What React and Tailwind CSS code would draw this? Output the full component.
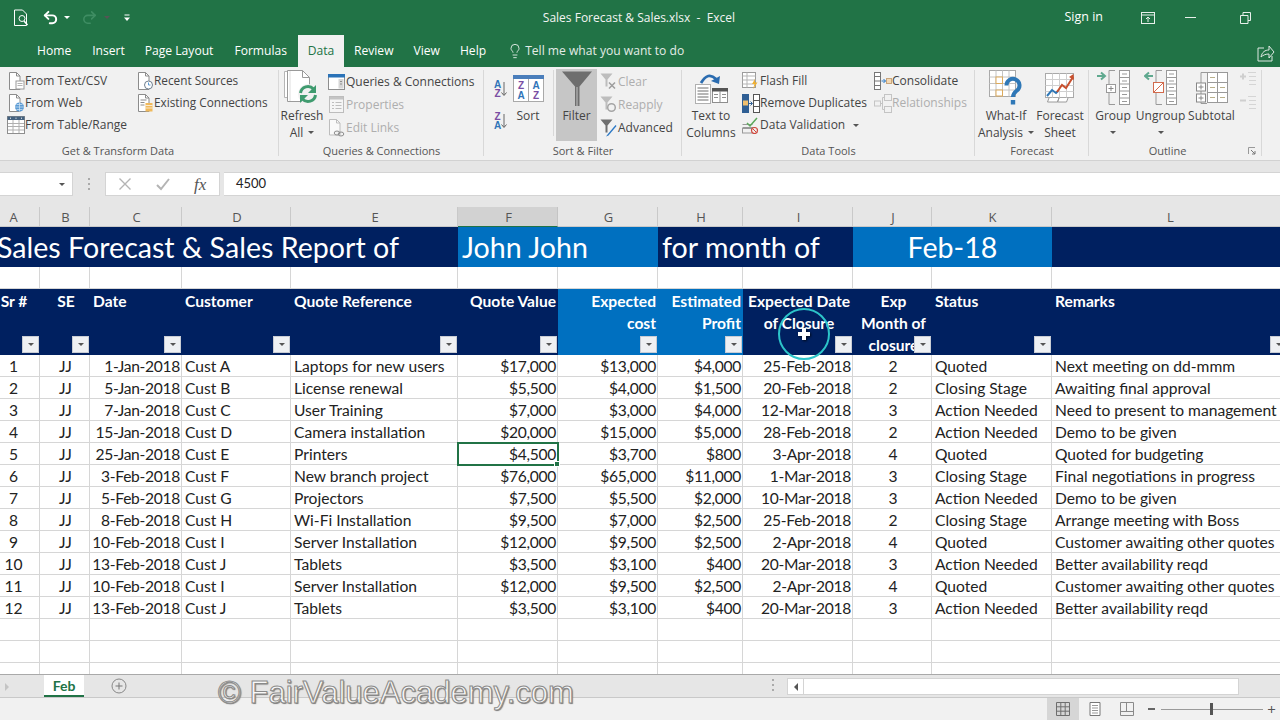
import React from "react";
import { Lightbulb, Undo2, Redo2 } from "lucide-react";

const G = "#8c8c8c";
const I = ({ children, w = 16, h = 16, className = "" }) => (
  <svg width={w} height={h} viewBox={`0 0 ${w} ${h}`} className={`shrink-0 ${className}`}>{children}</svg>
);
const FromText = () => <I w={18} h={18}><path d="M2.500 .5h7l3.500 3.500v13.500h-10.500z" fill="#fff" stroke={G} /><path d="M9.500 .5v3.500h3.500" fill="none" stroke={G} /><rect x="9" y="9" width="8" height="8" fill="#fff" stroke="#9a9a9a" /><path d="M10.500 11.500h5M10.500 13.500h5" stroke="#b5b5b5" /></I>;
const FromWeb = () => <I w={18} h={18}><path d="M2.500 .5h7l3.500 3.500v13.500h-10.500z" fill="#fff" stroke={G} /><path d="M9.500 .5v3.500h3.500" fill="none" stroke={G} /><circle cx="12.500" cy="13" r="4.500" fill="#5b9bd5" /><path d="M8 13h9M12.500 8.500v9M9.500 10.500h6M9.500 15.500h6" stroke="#d5e6f5" strokeWidth=".7" /></I>;
const TableRange = () => <I w={18} h={18}><rect x=".5" y=".5" width="17" height="17" fill="#fff" stroke="#8e8e8e" /><rect x=".5" y=".5" width="17" height="3.500" fill="#44617f" /><path d="M1 7.500h16M1 10.500h16M1 14h16M6 4v13M12 4v13" stroke="#b0b0b0" /><path d="M3 2.200h1M8.500 2.200h1M14 2.200h1" stroke="#fff" /></I>;
const Recent = () => <I w={18} h={18}><path d="M2.500 .5h7l3.500 3.500v13.500h-10.500z" fill="#fff" stroke={G} /><path d="M9.500 .5v3.500h3.500" fill="none" stroke={G} /><circle cx="12.500" cy="13" r="4" fill="#fff" stroke="#6f7f8f" /><path d="M12.500 10.500v2.500h2" fill="none" stroke="#5b9bd5" /></I>;
const Existing = () => <I w={18} h={18}><path d="M2.500 .5h7l3.500 3.500v13.500h-10.500z" fill="#fff" stroke={G} /><path d="M9.500 .5v3.500h3.500M4.500 6h6M4.500 8.500h4M4.500 11h4" fill="none" stroke={G} /><rect x="9.500" y="9" width="7" height="8.500" fill="#f0b95b" /><path d="M9.500 11.500h7M9.500 14h7" stroke="#fff" strokeWidth=".7" /></I>;
const Queries = () => <I w={17} h={16}><rect x=".5" y=".5" width="16" height="15" fill="#fff" stroke="#8e8e8e" /><rect x="0" y="0" width="17" height="3.500" fill="#2b73b8" /><rect x="10.500" y="5" width="5" height="9.500" fill="#d6d6d6" /><path d="M12 7.500h2M12 10h2" stroke="#8e8e8e" /></I>;
const Properties = () => <I w={15} h={17}><rect x=".5" y=".5" width="14" height="16" fill="#f5f5f5" stroke="#bdbdbd" /><rect x="1" y="1" width="13" height="2.500" fill="#c4c4c4" /><path d="M3 6.500h2M6.500 6.500h6M3 9.500h2M6.500 9.500h6M3 12.500h2M6.500 12.500h6" stroke="#bdbdbd" /></I>;
const EditLinks = () => <I w={17} h={18}><path d="M1.500 .5h7l3.500 3.500v12h-10.500z" fill="#f9f9f9" stroke="#bdbdbd" /><path d="M8.500 .5v3.500h3.500" fill="none" stroke="#bdbdbd" /><ellipse cx="9" cy="14" rx="2.800" ry="2" fill="#f1f1f1" stroke="#8f8f8f" /><ellipse cx="13" cy="15" rx="2.800" ry="2" fill="none" stroke="#8f8f8f" /></I>;
const Refresh = () => <I w={36} h={36}><path d="M.5 1.500h19v26h-19z" fill="#fff" stroke="#b5b5b5" /><path d="M3.500 .5h15l7 7v24h-22z" fill="#fff" stroke="#9a9a9a" /><path d="M18.500 .5v7h7" fill="none" stroke="#9a9a9a" /><path d="M6 1v30" stroke="#dedede" /><circle cx="24" cy="24" r="10" fill="#f1f1f1" /><path d="M16.500 23a7.500 7.500 0 0 1 13-4" fill="none" stroke="#3f9b6f" strokeWidth="3" /><path d="M32 15v8h-8z" fill="#3f9b6f" /><path d="M31.500 25a7.500 7.500 0 0 1-13 4" fill="none" stroke="#3f9b6f" strokeWidth="3" /><path d="M16 33v-8h8z" fill="#3f9b6f" /></I>;
const Letter = ({ x, y, c, children, s = 10 }) => <text x={x} y={y} fill={c} fontSize={s} fontWeight="700" fontFamily="Liberation Sans, sans-serif" textAnchor="middle">{children}</text>;
const AZ = ({ flip }) => <I w={14} h={18}><Letter x="4.500" y="8" c={flip ? "#7a4ea3" : "#2f74b8"}>{flip ? "Z" : "A"}</Letter><Letter x="4.500" y="16.500" c={flip ? "#2f74b8" : "#7a4ea3"}>{flip ? "A" : "Z"}</Letter><path d="M11 2v13M8.500 12.500l2.500 3 2.500-3" fill="none" stroke="#666" /></I>;
const SortBig = () => <I w={31} h={27}><rect x=".5" y=".5" width="30" height="26" fill="#fff" stroke="#a9a9a9" /><rect x="0" y="0" width="31" height="4" fill="#4a7ebb" /><path d="M15.500 4v23" stroke="#a9a9a9" /><Letter x="8" y="14" c="#7a4ea3">Z</Letter><Letter x="8" y="24" c="#2f74b8">A</Letter><Letter x="23" y="14" c="#2f74b8">A</Letter><Letter x="23" y="24" c="#7a4ea3">Z</Letter></I>;
const Funnel = () => <I w={30} h={36}><path d="M0 .5h30l-12.500 15v19.500h-4.500v-19.500z" fill="#6e6e6e" /><path d="M15 16v19" stroke="#a8a8a8" strokeWidth="1.500" /></I>;
const mini = c => <path d="M.5 .5h12l-5 6v7h-2v-7z" fill={c} />;
const Clear = () => <I w={17} h={17}>{mini("#bdbdbd")}<path d="M9 9.500l6 6M15 9.500l-6 6" stroke="#9d9d9d" strokeWidth="1.500" /></I>;
const Reapply = () => <I w={17} h={17}>{mini("#bdbdbd")}<circle cx="11.500" cy="11.500" r="3.800" fill="none" stroke="#a5a5a5" strokeWidth="1.500" /></I>;
const Advanced = () => <I w={17} h={18}>{mini("#6e6e6e")}<path d="M15.500 6l-8 9.500-1.500 2 2.500-1 8-9.500z" fill="#2b78c5" /></I>;
const TextCols = () => <I w={33} h={32}><path d="M6 11 q7 -12 15 -4" fill="none" stroke="#2b6cb0" strokeWidth="2.800" /><path d="M25 4l-1 8-8-3z" fill="#2b6cb0" /><rect x=".5" y="12.500" width="15" height="19" fill="#fff" stroke="#b0b0b0" /><path d="M2.500 16h11M2.500 19h11M2.500 22h11M2.500 25h11M2.500 28h11" stroke="#6f6f6f" /><rect x="17.500" y="16.500" width="15" height="14" fill="#fff" stroke="#8e8e8e" /><rect x="17" y="16" width="16" height="3.500" fill="#555" /><path d="M25 19v12M19 22.500h4M19 25.500h4M27 22.500h4M27 25.500h4" stroke="#8e8e8e" /></I>;
const FlashFill = () => <I w={17} h={18}><rect x=".5" y=".5" width="13" height="15" fill="#fff" stroke="#9c9c9c" /><path d="M.5 4h13M.5 8h13M.5 12h13M5 .5v15" stroke="#b5b5b5" /><path d="M13 7l-3 5h2.500l-1.500 5 4.500-6.500h-2.500z" fill="#f0b030" /></I>;
const RemoveDup = () => <I w={18} h={19}><rect x="0" y="0" width="7" height="19" fill="#2f5f94" /><rect x="1" y="6.500" width="5" height="5" fill="#f0c070" /><rect x="11.500" y=".5" width="6" height="18" fill="#fff" stroke="#555" /><path d="M11.500 6.500h6M11.500 12.500h6" stroke="#555" /><path d="M7 9.500h3M8.500 7.500l2 2-2 2" stroke="#2f5f94" fill="none" /></I>;
const DataVal = () => <I w={17} h={17}><path d="M.5 7.500h10M.5 10.500h13" stroke="#999" fill="none" /><rect x=".5" y="11.500" width="12" height="4.500" fill="#f1f1f1" stroke="#999" /><path d="M5 6l3 3 7-8" fill="none" stroke="#5aa85a" strokeWidth="1.500" /><circle cx="12.500" cy="13.500" r="3" fill="#f1f1f1" stroke="#d0473c" strokeWidth="1.200" /><path d="M10.500 11.500l4 4" stroke="#d0473c" /></I>;
const Consolidate = () => <I w={18} h={18}><rect x=".5" y=".5" width="6" height="17" fill="#fff" stroke="#777" /><path d="M.5 4.500h6M.5 9h6M.5 13.500h6" stroke="#777" /><path d="M7.500 9h4M9.500 7l2 2-2 2" stroke="#2b78c5" fill="none" /><rect x="12.500" y="6.500" width="5" height="5" fill="#f3d9b5" stroke="#c9a57c" /></I>;
const Relationships = () => <I w={18} h={19}><rect x=".5" y="7" width="6" height="5" fill="#f1f1f1" stroke="#c4c4c4" /><rect x="10.500" y=".5" width="7" height="6" fill="#f1f1f1" stroke="#c4c4c4" /><rect x="10.500" y="12.500" width="7" height="6" fill="#f1f1f1" stroke="#c4c4c4" /><path d="M6.500 9.500h2M8.500 3.500v12M8.500 3.500h2M8.500 15.500h2" stroke="#c4c4c4" fill="none" /></I>;
const WhatIf = () => <I w={34} h={37}><rect x=".5" y=".5" width="26" height="26" fill="#fff" stroke="#a9a9a9" /><path d="M.5 7h26M.5 13.500h26M.5 20h26M7 .5v26M13.500 .5v26M20 .5v26" stroke="#c4c4c4" /><rect x="7" y="7" width="6.500" height="6.500" fill="#fff" stroke="#dcaa5c" /><rect x="7" y="20" width="6.500" height="6" fill="#fff" stroke="#dcaa5c" /><path d="M17.500 15.500a6.500 6.500 0 1 1 10.500 5c-2.500 2-4 3-4 6.500" fill="none" stroke="#2f78b7" strokeWidth="4" /><rect x="21.800" y="30" width="4.400" height="4.500" fill="#2f78b7" /></I>;
const Forecast = () => <I w={31} h={31}><rect x=".5" y=".5" width="28" height="24" fill="#fff" stroke="#a9a9a9" /><path d="M.5 6.500h28M.5 12.500h28M.5 18.500h28M7.500 .5v24M14.500 .5v24M21.500 .5v24" stroke="#cfcfcf" /><path d="M2 23l5-6 4 3 2-2" fill="none" stroke="#2f78b7" strokeWidth="2" /><path d="M12 19l5-7 4 3 7-11" fill="none" stroke="#c8502e" strokeWidth="2" /><path d="M28.500 1l.5 6-5-3z" fill="#c8502e" /><path d="M4 25l-1.500 4h10l1.500-4M14 25l-1.500 4h9l1.500-4" fill="#fff" stroke="#9a9a9a" /></I>;
const list = x => <><rect x={x + .5} y=".5" width="10" height="34" fill="#fff" stroke="#999" /><path d={`M${x + .5} 7.500h10M${x + .5} 14h10M${x + .5} 21h10M${x + .5} 28h10M${x + 3} 4h5M${x + 3} 11h5M${x + 3} 17.500h5M${x + 3} 24.500h5M${x + 3} 31.500h5`} stroke="#999" fill="none" /></>;
const GroupIc = () => <I w={33} h={36}><path d="M0 6h7M4 2.500l4 3.500-4 3.500" fill="none" stroke="#5fa98f" strokeWidth="2" /><path d="M18 .5h-6v34h6" fill="none" stroke="#999" />{list(22)}<rect x="9.500" y="14.500" width="9" height="8" fill="#fff" stroke="#999" /><path d="M11.500 18.500h5M14 16v5" stroke="#888" /></I>;
const UngroupIc = () => <I w={33} h={36}><path d="M9 6h-7M5 2.500l-4 3.500 4 3.500" fill="none" stroke="#5fa98f" strokeWidth="2" /><path d="M18 .5h-6v34h6" fill="none" stroke="#999" />{list(22)}<rect x="9.500" y="12.500" width="10" height="10" fill="#fff" stroke="#d26a4c" /><path d="M10 22l9-9" stroke="#d26a4c" /></I>;
const SubtotalIc = () => <I w={32} h={32}><path d="M11 .5h-6v31h6" fill="none" stroke="#999" /><rect x="11.500" y=".5" width="20" height="30" fill="#fff" stroke="#999" /><path d="M11.500 10.500h20M11.500 20.500h20M21.500 .5v30" stroke="#999" /><path d="M14 5.500h5M14 15.500h5M14 25.500h5M24 15.500h5M24 25.500h5" stroke="#b9b08c" /><rect x=".5" y="11" width="9" height="8" fill="#fff" stroke="#888" /><rect x=".5" y="22" width="9" height="8" fill="#fff" stroke="#888" /><path d="M2.500 15h5M5 12.500v5M2.500 26h5M5 23.500v5" stroke="#888" /></I>;
const Detail = ({ plus }) => <I w={17} h={15}><path d="M0 4.500h6" stroke="#cfcfcf" strokeWidth="2" />{plus && <path d="M3 1.500v6" stroke="#cfcfcf" strokeWidth="2" />}<path d="M8 .5h8M9 4.500h7M9 8.500h7M9 12.500h7" stroke="#d5d5d5" /></I>;
const Caret = ({ className = "" }) => <span className={`inline-block w-0 h-0 border-x-[3px] border-x-transparent border-t-[3px] border-t-[#555] ${className}`} />;

const Small = ({ icon, label, off, caret, slot = "w-[19px]", h = "h-[22px]" }) => (
  <div className={`flex items-center ${h} whitespace-nowrap ${off ? "text-[#aeaeae]" : "text-[#444]"}`}>
    <span className={`${slot} flex justify-center shrink-0`}>{icon}</span>
    <span>{label}</span>
    {caret && <Caret className="ml-[8px]" />}
  </div>
);
const Big = ({ icon, lines, className = "" }) => (
  <div className={`flex flex-col items-center leading-[17px] text-[#444] whitespace-nowrap ${className}`}>
    <div className="h-[38px] flex items-center justify-center">{icon}</div>
    {lines.map((l, i) => <div key={i} className="h-[17px] flex items-center">{l}</div>)}
  </div>
);
const Group = ({ w, label, children, lc = "" }) => (
  <div className={`${w} shrink-0 relative flex flex-col h-full`}>
    <div className="flex-1 flex min-h-0 pt-[2px]">{children}</div>
    <div className={`h-[18px] text-[11px] leading-[18px] text-center text-[#555] ${lc}`}>{label}</div>
    <div className="absolute right-0 top-[3px] bottom-[4px] w-px bg-[#d8d8d8]" />
  </div>
);

const cols = "grid grid-cols-[54px_50px_92px_109px_167px_100px_100px_85px_110px_79px_120px_236px]";
const cell = "border-r border-b border-[#d6d6d6] h-[22px] leading-[21px] pt-[1px] whitespace-nowrap overflow-hidden";
const L = `${cell} pl-[3px]`;
const C = `${cell} pl-[2px] text-center`;
const R = `${cell} pr-[1px] text-right tracking-[-0.3px]`;
const letters = ["A", "B", "C", "D", "E", "F", "G", "H", "I", "J", "K", "L"];
const rows = [
  [1, "1-Jan-2018", "Cust A", "Laptops for new users", "$17,000", "$13,000", "$4,000", "25-Feb-2018", 2, "Quoted", "Next meeting on dd-mmm"],
  [2, "5-Jan-2018", "Cust B", "License renewal", "$5,500", "$4,000", "$1,500", "20-Feb-2018", 2, "Closing Stage", "Awaiting final approval"],
  [3, "7-Jan-2018", "Cust C", "User Training", "$7,000", "$3,000", "$4,000", "12-Mar-2018", 3, "Action Needed", "Need to present to management"],
  [4, "15-Jan-2018", "Cust D", "Camera installation", "$20,000", "$15,000", "$5,000", "28-Feb-2018", 2, "Action Needed", "Demo to be given"],
  [5, "25-Jan-2018", "Cust E", "Printers", "$4,500", "$3,700", "$800", "3-Apr-2018", 4, "Quoted", "Quoted for budgeting"],
  [6, "3-Feb-2018", "Cust F", "New branch project", "$76,000", "$65,000", "$11,000", "1-Mar-2018", 3, "Closing Stage", "Final negotiations in progress"],
  [7, "5-Feb-2018", "Cust G", "Projectors", "$7,500", "$5,500", "$2,000", "10-Mar-2018", 3, "Action Needed", "Demo to be given"],
  [8, "8-Feb-2018", "Cust H", "Wi-Fi Installation", "$9,500", "$7,000", "$2,500", "25-Feb-2018", 2, "Closing Stage", "Arrange meeting with Boss"],
  [9, "10-Feb-2018", "Cust I", "Server Installation", "$12,000", "$9,500", "$2,500", "2-Apr-2018", 4, "Quoted", "Customer awaiting other quotes"],
  [10, "13-Feb-2018", "Cust J", "Tablets", "$3,500", "$3,100", "$400", "20-Mar-2018", 3, "Action Needed", "Better availability reqd"],
  [11, "10-Feb-2018", "Cust I", "Server Installation", "$12,000", "$9,500", "$2,500", "2-Apr-2018", 4, "Quoted", "Customer awaiting other quotes"],
  [12, "13-Feb-2018", "Cust J", "Tablets", "$3,500", "$3,100", "$400", "20-Mar-2018", 3, "Action Needed", "Better availability reqd"],
];
const Fbtn = () => (
  <span className="absolute bottom-[2px] right-[1px] w-[17px] h-[17px] bg-[#eef0f3] border border-[#c8ccd4] flex items-center justify-center"><Caret /></span>
);
const headers = [
  { t: ["Sr #"], a: "text-center pl-[2px]", bg: "bg-[#002060]" },
  { t: ["SE"], a: "text-center pl-[2px]", bg: "bg-[#002060]" },
  { t: ["Date"], a: "text-left pl-[3px]", bg: "bg-[#002060]" },
  { t: ["Customer"], a: "text-left pl-[3px]", bg: "bg-[#002060]" },
  { t: ["Quote Reference"], a: "text-left pl-[3px]", bg: "bg-[#002060]" },
  { t: ["Quote Value"], a: "text-right pr-[2px]", bg: "bg-[#002060]" },
  { t: ["Expected", "cost"], a: "text-right pr-[2px]", bg: "bg-[#0070c0]" },
  { t: ["Estimated", "Profit"], a: "text-right pr-[2px]", bg: "bg-[#0070c0]" },
  { t: ["Expected Date", "of Closure"], a: "text-center pl-[2px]", bg: "bg-[#002060]" },
  { t: ["Exp", "Month of", "closure"], a: "text-center pl-[2px]", bg: "bg-[#002060]" },
  { t: ["Status"], a: "text-left pl-[3px]", bg: "bg-[#002060]" },
  { t: ["Remarks"], a: "text-left pl-[3px]", bg: "bg-[#002060]" },
];

export default function App() {
  return (
    <div className="relative w-[1280px] h-[720px] overflow-hidden flex flex-col bg-white font-['Open_Sans',sans-serif] text-[12px]">
      {/* Title bar */}
      <div className="h-[35px] shrink-0 bg-[#217346] flex items-center text-white">
        <div className="w-[534px] flex items-center pl-[13px] gap-0">
          <svg width="18" height="18" viewBox="0 0 18 18" className="shrink-0"><path d="M1.500 1h8l4 4v11.500h-12z" fill="none" stroke="#fff" /><circle cx="9" cy="9.500" r="3" fill="none" stroke="#fff" /><path d="M11 12l3.500 4" stroke="#fff" strokeWidth="1.500" /></svg>
          <Undo2 size={17} strokeWidth={2.8} className="ml-[11px] text-white" />
          <Caret className="ml-[5px] border-t-white" />
          <Redo2 size={17} strokeWidth={2.2} className="ml-[11px] text-[#3f8d63]" />
          <Caret className="ml-[6px] border-t-[#3f8d63]" />
          <svg width="8" height="8" viewBox="0 0 8 8" className="ml-[13px] shrink-0"><path d="M1.500 1h5" stroke="#fff" /><path d="M1 3.500h6l-3 3.500z" fill="#fff" /></svg>
        </div>
        <div className="w-[210px] text-center text-[12px] whitespace-pre text-[#f3f3f3]">Sales Forecast &amp; Sales.xlsx  -  Excel</div>
        <div className="flex-1 flex items-center justify-end">
          <span className="mr-[38px] text-[12.500px]">Sign in</span>
          <svg width="14" height="12" viewBox="0 0 14 12" className="mr-[30px]"><rect x=".5" y=".5" width="13" height="11" fill="none" stroke="#e8f0eb" /><path d="M.5 3h13" stroke="#e8f0eb" /><path d="M7 10V5M5 7l2-2 2 2" fill="none" stroke="#e8f0eb" /></svg>
          <span className="w-[11px] h-px bg-[#e8f0eb] mr-[44px]" />
          <svg width="11" height="12" viewBox="0 0 11 12" className="mr-[29px]"><path d="M.5 3.500h7.500v8h-7.500zM3 3.500v-3h7.500v8h-2.500" fill="none" stroke="#e8f0eb" /></svg>
        </div>
      </div>
      {/* Tabs */}
      <div className="h-[32px] shrink-0 bg-[#217346] flex items-end text-white text-[12.100px] relative">
        <div className="h-[32px] w-[298px] flex items-center pl-[37px] whitespace-nowrap">
          <span>Home</span><span className="ml-[21px]">Insert</span><span className="ml-[20px]">Page Layout</span><span className="ml-[21px]">Formulas</span>
        </div>
        <div className="h-[32px] w-[46px] bg-[#f1f1f1] text-[#217346] flex items-center justify-center">Data</div>
        <div className="h-[32px] flex items-center pl-[10px] whitespace-nowrap">
          <span>Review</span><span className="ml-[20px]">View</span><span className="ml-[20px]">Help</span>
          <Lightbulb size={16} strokeWidth={1.200} className="ml-[21px] text-white" />
          <span className="ml-[2px] text-[#e3ece6]">Tell me what you want to do</span>
        </div>
        <svg width="18" height="18" viewBox="0 0 18 18" className="absolute right-[5px] top-[9px]"><path d="M7 4H1v13h14v-5" fill="none" stroke="#dfe9e3" /><path d="M4 13c1-5 4-7 8-7V2l5 6-5 6v-4c-3 0-6 1-8 3z" fill="none" stroke="#dfe9e3" /></svg>
      </div>
      {/* Ribbon */}
      <div className="h-[94px] shrink-0 bg-[#f1f1f1] border-b border-[#d2d2d2] flex text-[12px] leading-none text-[#444]">
        <Group w="w-[279px]" label="Get & Transform Data" lc="pr-[43px]">
          <div className="w-[135px] pl-[6px] pt-[1px]">
            <Small icon={<FromText />} label="From Text/CSV" />
            <Small icon={<FromWeb />} label="From Web" />
            <Small icon={<TableRange />} label="From Table/Range" />
          </div>
          <div className="pt-[1px] text-[11.800px]">
            <Small icon={<Recent />} label="Recent Sources" />
            <Small icon={<Existing />} label="Existing Connections" />
          </div>
        </Group>
        <Group w="w-[205px]" label="Queries & Connections">
          <Big className="w-[46px]" icon={<Refresh />} lines={["Refresh", <>All<Caret className="ml-[5px] mb-[1px]" /></>]} />
          <div className="pt-[1px] ml-[2px]">
            <Small h="h-[23px]" icon={<Queries />} label="Queries & Connections" />
            <Small h="h-[23px]" off icon={<Properties />} label="Properties" />
            <Small h="h-[23px]" off icon={<EditLinks />} label="Edit Links" />
          </div>
        </Group>
        <Group w="w-[198px]" label="Sort & Filter">
          <div className="w-[25px] pl-[9px] pt-[11px] flex flex-col gap-[14px]"><AZ /><AZ flip /></div>
          <Big className="w-[38px]" icon={<SortBig />} lines={["Sort"]} />
          <div className="w-px h-[66px] mt-[1px] ml-[6px] bg-[#d8d8d8]" />
          <div className="w-[41px] h-[72px] ml-[2px] bg-[#c6c6c6] flex flex-col items-center text-[#444] shrink-0">
            <div className="h-[38px] flex items-center pt-[2px]"><Funnel /></div>
            <div className="h-[17px] flex items-center">Filter</div>
          </div>
          <div className="pt-[1px] ml-[2px]">
            <Small h="h-[23px]" off icon={<Clear />} label="Clear" />
            <Small h="h-[23px]" off icon={<Reapply />} label="Reapply" />
            <Small h="h-[23px]" icon={<Advanced />} label="Advanced" />
          </div>
        </Group>
        <Group w="w-[293px]" label="Data Tools">
          <Big className="w-[58px]" icon={<TextCols />} lines={["Text to", "Columns"]} />
          <div className="w-[133px] pl-[1px] pt-[1px]">
            <Small icon={<FlashFill />} label="Flash Fill" />
            <Small icon={<RemoveDup />} label="Remove Duplicates" />
            <Small icon={<DataVal />} label="Data Validation" caret />
          </div>
          <div className="pt-[1px]">
            <Small icon={<Consolidate />} label="Consolidate" />
            <Small off icon={<Relationships />} label="Relationships" />
          </div>
        </Group>
        <Group w="w-[114px]" label="Forecast">
          <Big className="w-[62px]" icon={<WhatIf />} lines={["What-If", <>Analysis<Caret className="ml-[5px] mb-[1px]" /></>]} />
          <Big className="w-[46px]" icon={<Forecast />} lines={["Forecast", "Sheet"]} />
        </Group>
        <Group w="w-[173px]" label="Outline" lc="pr-[16px]">
          <Big className="w-[48px]" icon={<GroupIc />} lines={["Group", <Caret />]} />
          <Big className="w-[47px]" icon={<UngroupIc />} lines={["Ungroup", <Caret />]} />
          <Big className="w-[55px]" icon={<SubtotalIc />} lines={["Subtotal"]} />
          <div className="pl-[1px] pt-[3px] flex flex-col gap-[9px]"><Detail plus /><Detail /></div>
          <svg width="8" height="8" viewBox="0 0 8 8" className="absolute right-[6px] bottom-[5px]"><path d="M.5 7V.5H7" fill="none" stroke="#999" /><path d="M3 3l4 4M7 4v3H4" fill="none" stroke="#777" /></svg>
        </Group>
      </div>
      {/* Formula bar */}
      <div className="h-[46px] shrink-0 bg-[#e6e6e6] pt-[11px] flex items-start">
        <div className="w-[73px] h-[24px] bg-white border-r border-y border-[#d4d4d4] flex items-center justify-end pr-[7px]"><Caret /></div>
        <div className="w-[32px] h-[24px] flex flex-col items-center justify-center gap-[3px]">
          <span className="w-[2px] h-[2px] bg-[#aaa]" /><span className="w-[2px] h-[2px] bg-[#aaa]" /><span className="w-[2px] h-[2px] bg-[#aaa]" />
        </div>
        <div className="w-[115px] h-[24px] bg-white border border-[#d4d4d4] flex items-center pl-[12px]">
          <svg width="14" height="14" viewBox="0 0 14 14"><path d="M1.500 1.500l11 11M12.500 1.500l-11 11" stroke="#b4b4b4" strokeWidth="1.400" /></svg>
          <svg width="14" height="14" viewBox="0 0 14 14" className="ml-[24px]"><path d="M1 8l4 4 8-10" fill="none" stroke="#b4b4b4" strokeWidth="2" /></svg>
          <span className="ml-[24px] font-['Liberation_Serif',serif] italic text-[17px] leading-none text-[#555]">fx</span>
        </div>
        <div className="flex-1 h-[24px] ml-[4px] bg-white border-y border-[#d4d4d4] flex items-center pl-[12px] text-[13px] font-['Lato',sans-serif] text-[#222]">4500</div>
      </div>
      {/* Sheet */}
      <div className="flex-1 min-h-0 overflow-hidden ml-[-14px] w-[1320px] font-['Lato',sans-serif] text-[15.600px] text-[#222]">
        <div className={`${cols} grid-rows-[20px] h-[20px] bg-[#e6e6e6] text-[#555] text-[13px] leading-[21px] font-['Open_Sans',sans-serif]`}>
          {letters.map(l => (
            <div key={l} className={`text-center pl-[2px] border-r border-b ${l === "F" ? "bg-[#d2d2d2] border-b-[#217346] border-r-[#c4c4c4]" : "border-[#c9c9c9]"}`}>{l}</div>
          ))}
        </div>
        <div className={`${cols} grid-rows-[40px] h-[40px] text-white text-[28.600px] leading-[41px]`}>
          <div className="col-span-5 bg-[#002060] pl-[11px] whitespace-nowrap">Sales Forecast &amp; Sales Report of</div>
          <div className="col-span-2 bg-[#0070c0] pl-[4px] whitespace-nowrap">John John</div>
          <div className="col-span-2 bg-[#002060] pl-[4px] whitespace-nowrap">for month of</div>
          <div className="col-span-2 bg-[#0070c0] text-center">Feb-18</div>
          <div className="bg-[#002060]" />
        </div>
        <div className={cols}>{letters.map(l => <div key={l} className={cell} />)}</div>
        <div className={`${cols} grid-rows-[66px] h-[66px] text-white font-bold leading-[22px]`}>
          {headers.map((h, i) => (
            <div key={i} className={`relative ${h.bg} ${h.a} pt-[1px]`}>
              {h.t.map((t, j) => <div key={j} className="h-[22px] whitespace-nowrap">{t}</div>)}
              <Fbtn />
            </div>
          ))}
        </div>
        {rows.map((r, i) => (
          <div key={i} className={cols}>
            <div className={C}>{r[0]}</div>
            <div className={C}>JJ</div>
            <div className={R}>{r[1]}</div>
            <div className={L}>{r[2]}</div>
            <div className={L}>{r[3]}</div>
            <div className={`${R} ${i === 4 ? "relative !overflow-visible outline-2 -outline-offset-1 outline-[#217346]" : ""}`}>
              {r[4]}
              {i === 4 && <span className="absolute right-[-3px] bottom-[-3px] w-[6px] h-[6px] bg-[#217346] border border-white" />}
            </div>
            <div className={R}>{r[5]}</div>
            <div className={R}>{r[6]}</div>
            <div className={R}>{r[7]}</div>
            <div className={C}>{r[8]}</div>
            <div className={L}>{r[9]}</div>
            <div className={L}>{r[10]}</div>
          </div>
        ))}
        {[0, 1, 2].map(n => <div key={n} className={cols}>{letters.map(l => <div key={l} className={cell} />)}</div>)}
      </div>
      {/* Sheet tabs */}
      <div className="h-[24px] shrink-0 bg-[#e6e6e6] border-t border-[#a9a9a9] border-b border-b-[#c9c9c9] flex items-start">
        <span className="ml-[5px] mt-[8px] w-0 h-0 border-y-[4px] border-y-transparent border-l-[4px] border-l-[#c4c4c4]" />
        <div className="ml-[35px] w-[40px] h-[22px] bg-white border-b-2 border-[#217346] text-[#217346] font-bold text-[14px] font-['Lato',sans-serif] flex items-center justify-center">Feb</div>
        <svg width="16" height="16" viewBox="0 0 16 16" className="ml-[27px] mt-[3px]"><circle cx="8" cy="8" r="7" fill="none" stroke="#888" /><path d="M4.500 8h7M8 4.500v7" stroke="#777" /></svg>
        <div className="ml-[645px] mt-[4px] flex flex-col gap-[3px]">
          <span className="w-[2px] h-[2px] bg-[#aaa]" /><span className="w-[2px] h-[2px] bg-[#aaa]" /><span className="w-[2px] h-[2px] bg-[#aaa]" />
        </div>
        <div className="ml-[13px] mt-[3px] w-[452px] h-[17px] bg-white border border-[#d4d4d4] flex">
          <div className="w-[16px] h-full border-r border-[#d4d4d4] flex items-center justify-center"><span className="w-0 h-0 border-y-[4px] border-y-transparent border-r-[4px] border-r-[#555]" /></div>
        </div>
      </div>
      {/* Status bar */}
      <div className="h-[22px] shrink-0 bg-[#f1f1f1] flex items-stretch justify-end">
        <div className="w-[32px] bg-[#d6d6d6] flex items-center justify-center">
          <svg width="14" height="14" viewBox="0 0 14 14"><path d="M.5 .5h13v13h-13zM.5 4.800h13M.5 9.200h13M4.800 .5v13M9.200 .5v13" fill="none" stroke="#6e6e6e" /></svg>
        </div>
        <div className="w-[32px] flex items-center justify-center">
          <svg width="14" height="14" viewBox="0 0 14 14"><path d="M2 .5h10v13h-10z" fill="#fff" stroke="#777" /><path d="M4 3.500h6M4 6h6M4 8.500h6M4 11h6" stroke="#999" /></svg>
        </div>
        <div className="w-[32px] flex items-center justify-center">
          <svg width="14" height="14" viewBox="0 0 14 14"><path d="M.5 .5h13v13h-13zM.5 9.500h13M6.500 .5v9" fill="none" stroke="#8a8a8a" /></svg>
        </div>
        <div className="w-[13px] flex items-center ml-[5px]"><span className="w-[7px] h-[2px] bg-[#666]" /></div>
        <div className="w-[102px] flex items-center relative">
          <div className="w-full h-px bg-[#9a9a9a]" />
          <span className="absolute left-[49px] top-[5px] w-[3px] h-[12px] bg-[#555]" />
        </div>
        <div className="w-[17px] flex items-center justify-center text-[15px] leading-none text-[#555]">+</div>
      </div>
      {/* Watermark */}
      <div className="absolute left-[218px] top-[675px] whitespace-nowrap font-['Liberation_Sans',sans-serif] text-[31px] leading-[36px] text-[#f8f8f8] [-webkit-text-stroke:1px_#8a8a8a] [text-shadow:1px_1px_1px_#777]">© FairValueAcademy.com</div>
      {/* Cursor highlight */}
      <div className="absolute left-[778px] top-[308px] w-[52px] h-[52px] rounded-full border-[2.500px] border-[#2cc4c9]" />
      <div className="absolute left-[798px] top-[328px] w-[12px] h-[12px] drop-shadow-[1px_1px_1px_rgba(0,0,0,0.7)]">
        <svg width="12" height="12" viewBox="0 0 12 12"><path d="M4 0h4v4h4v4H8v4H4V8H0V4h4z" fill="#fff" /></svg>
      </div>
    </div>
  );
}
